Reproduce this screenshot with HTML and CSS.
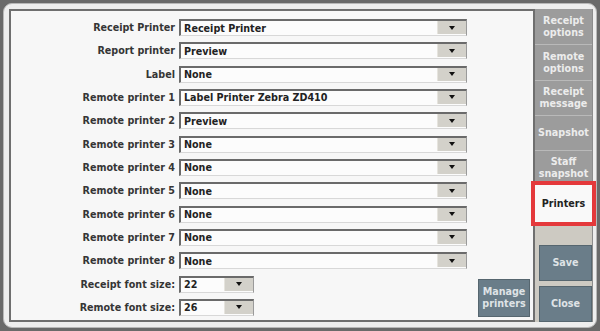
FILE: index.html
```html
<!doctype html>
<html>
    <head>
        <meta charset="utf-8">
        <title>Printers</title>
        <link rel="stylesheet" href="styles.css">
    </head>
    <body>
        <div class="window">
            <div class="panel">
                <div class="form">
                    <label>Receipt Printer</label>
                    <div class="select"><span>Receipt Printer</span><i class="drop"></i></div>
                    <label>Report printer</label>
                    <div class="select"><span>Preview</span><i class="drop"></i></div>
                    <label>Label</label>
                    <div class="select"><span>None</span><i class="drop"></i></div>
                    <label>Remote printer 1</label>
                    <div class="select"><span>Label Printer Zebra ZD410</span><i class="drop"></i></div>
                    <label>Remote printer 2</label>
                    <div class="select"><span>Preview</span><i class="drop"></i></div>
                    <label>Remote printer 3</label>
                    <div class="select"><span>None</span><i class="drop"></i></div>
                    <label>Remote printer 4</label>
                    <div class="select"><span>None</span><i class="drop"></i></div>
                    <label>Remote printer 5</label>
                    <div class="select"><span>None</span><i class="drop"></i></div>
                    <label>Remote printer 6</label>
                    <div class="select"><span>None</span><i class="drop"></i></div>
                    <label>Remote printer 7</label>
                    <div class="select"><span>None</span><i class="drop"></i></div>
                    <label>Remote printer 8</label>
                    <div class="select"><span>None</span><i class="drop"></i></div>
                    <label>Receipt font size:</label>
                    <div class="select small"><span>22</span><i class="drop"></i></div>
                    <label>Remote font size:</label>
                    <div class="select small"><span>26</span><i class="drop"></i></div>
                </div>
                <button type="button" class="manage">Manage printers</button>
            </div>

            <div class="sidebar">
                <div class="tab t1">Receipt options</div>
                <div class="tab t2">Remote options</div>
                <div class="tab t3">Receipt message</div>
                <div class="tab t4">Snapshot</div>
                <div class="tab t5">Staff snapshot</div>
                <div class="tab current">Printers</div>
                <div class="filler"></div>
                <button type="button" class="action save">Save</button>
                <button type="button" class="action">Close</button>
            </div>
        </div>
    </body>
</html>
```

FILE: styles.css
```css
html {
    padding: 0;
    margin: 0;
}
body {
    margin: 0;
    width: 600px;
    height: 331px;
    background: #6a6a6a;
    font-family: "DejaVu Sans", sans-serif;
    font-weight: bold;
    font-size: 9.6px;
    color: #333;
    overflow: hidden;
}

.window {
    margin: 3px;
    height: 325px;
    box-sizing: border-box;
    border: 1px solid #b8b8b8;
    border-radius: 9px;
    background: #eeeeee;
    padding: 5px 3px 5px 5px;
    display: flex;
}

.panel {
    width: 526px;
    box-sizing: border-box;
    border: 2px solid #6f6f6f;
    background: #f7f7f7;
    display: flex;
    justify-content: space-between;
}

.form {
    display: grid;
    grid-template-columns: 164px 288px;
    grid-auto-rows: 17px;
    column-gap: 4px;
    row-gap: 6.33px;
    padding-top: 8px;
    align-content: start;
}
.form label {
    text-align: right;
    line-height: 17px;
    color: #353535;
}

.select {
    box-sizing: border-box;
    border-top: 2px solid #6a6a6a;
    border-left: 2px solid #6a6a6a;
    border-bottom: 1px solid #d8d8d8;
    border-right: 1px solid #9a9a9a;
    background: #fcfcfc;
    display: flex;
    align-items: center;
    justify-content: space-between;
    color: #222;
}
.select span {
    padding-left: 3px;
}
.select.small {
    width: 75px;
}
.drop {
    align-self: stretch;
    width: 28px;
    margin: 0 0 1px 0;
    background: #d3d1ca;
    border-left: 1px solid #e6e4de;
    display: flex;
    align-items: center;
    justify-content: center;
}
.drop::after {
    content: "";
    border-left: 3.5px solid transparent;
    border-right: 3.5px solid transparent;
    border-top: 4px solid #111;
}

button {
    font-family: "DejaVu Sans", sans-serif;
    font-weight: bold;
    font-size: 9.6px;
    line-height: 12px;
    padding: 0;
    border-radius: 0;
}

.manage {
    align-self: flex-end;
    width: 52px;
    height: 38px;
    margin: 0 3px 3px 0;
    background: #6a7d89;
    border: 1px solid #56666f;
    color: #dfe3e6;
}

.sidebar {
    width: 58px;
    display: flex;
    flex-direction: column;
    background: #cdcac2;
    border-right: 1px solid #8c8c8c;
    box-sizing: border-box;
}
.tab {
    display: flex;
    align-items: center;
    justify-content: center;
    text-align: center;
    line-height: 12px;
    color: #ececec;
    background: #9c9c9c;
    border-bottom: 1px solid #b9b9b9;
    box-sizing: border-box;
}
.t1 { height: 36px; }
.t2 { height: 36px; }
.t3 { height: 35px; }
.t4 { height: 35px; }
.t5 { height: 34px; }
.tab.current {
    height: 37px;
    background: #f9f9f9;
    color: #222;
    border-bottom: none;
    outline: 4px solid #e4393b;
}
.filler {
    flex: 1;
}
.action {
    margin-left: 4px;
    width: 53px;
    height: 36px;
    background: #6a7d89;
    border: 1px solid #56666f;
    color: #dfe3e6;
}
.action.save {
    margin-bottom: 5px;
}
```
